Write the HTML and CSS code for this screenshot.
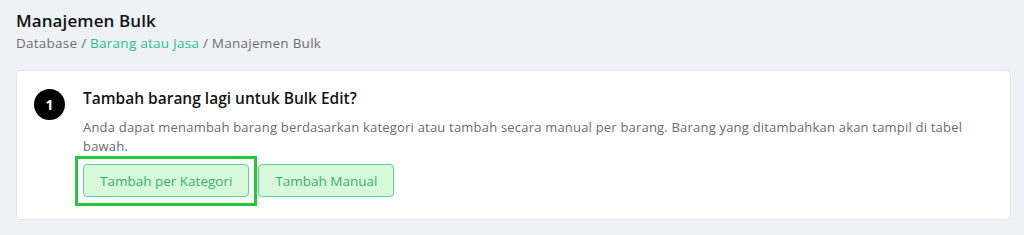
FILE: index.html
```html
<!DOCTYPE html>
<html lang="id">
<head>
  <meta charset="UTF-8" />
  <title>Manajemen Bulk</title>
  <link rel="stylesheet" href="styles.css">
</head>
<body>
  <div class="page">
    <!-- judul halaman -->
    <div class="page-header">
      <h1>Manajemen Bulk</h1>
      <div class="breadcrumb">
        Database / <a href="#">Barang atau Jasa</a> / Manajemen Bulk
      </div>
    </div>

    <!-- langkah 1 -->
    <div class="card">
      <div class="step-number">1</div>
      <div class="step-body">
        <h2>Tambah barang lagi untuk Bulk Edit?</h2>
        <p>Anda dapat menambah barang berdasarkan kategori atau tambah secara manual per barang. Barang yang ditambahkan akan tampil di tabel bawah.</p>
        <div class="button-group">
          <button class="btn-add highlight">Tambah per Kategori</button>
          <button class="btn-add">Tambah Manual</button>
        </div>
      </div>
    </div>
  </div>
</body>
</html>
```

FILE: styles.css
```css
* {
  box-sizing: border-box;
}
body {
  margin: 0;
  padding: 0;
  background-color: #eef1f5;
  font-family: 'Open Sans', sans-serif;
  color: #1a1a1a;
}
.page {
  padding: 9px 13px 0 16px;
}
h1 {
  margin: 0;
  font-size: 17px;
  line-height: 24px;
  font-weight: 600;
  color: #141414;
  letter-spacing: 0.1px;
}
.breadcrumb {
  margin-top: 1px;
  font-size: 13.5px;
  line-height: 18px;
  letter-spacing: 0.25px;
  color: #6e6e73;
}
.breadcrumb a {
  color: #2fbf86;
  text-decoration: none;
}
.card {
  display: flex;
  gap: 18px;
  margin-top: 18px;
  padding: 18px 18px 22px 17px;
  background-color: #ffffff;
  border: 1px solid #e1e4e8;
  border-radius: 5px;
}
.step-number {
  flex: none;
  width: 31px;
  height: 31px;
  border-radius: 50%;
  background-color: #000;
  color: #fff;
  font-size: 14px;
  font-weight: 700;
  display: flex;
  align-items: center;
  justify-content: center;
}
.step-body {
  flex: 1;
}
h2 {
  margin: 0;
  font-size: 15.5px;
  line-height: 18px;
  font-weight: 600;
  color: #141414;
}
.step-body p {
  margin: 11px 0 0 0;
  font-size: 13px;
  line-height: 19px;
  letter-spacing: 0.2px;
  color: #6b6b70;
}
.button-group {
  display: flex;
  gap: 9px;
  margin-top: 8px;
}
.btn-add {
  position: relative;
  height: 33px;
  padding: 0 16px;
  font-family: inherit;
  font-size: 13.5px;
  color: #3aad72;
  background-color: #d6fad9;
  border: 1px solid #5dd199;
  border-radius: 4px;
}
.btn-add.highlight::after {
  content: '';
  position: absolute;
  top: -9px;
  left: -9px;
  right: -9px;
  bottom: -10px;
  border: 3px solid #22c93a;
}
```
